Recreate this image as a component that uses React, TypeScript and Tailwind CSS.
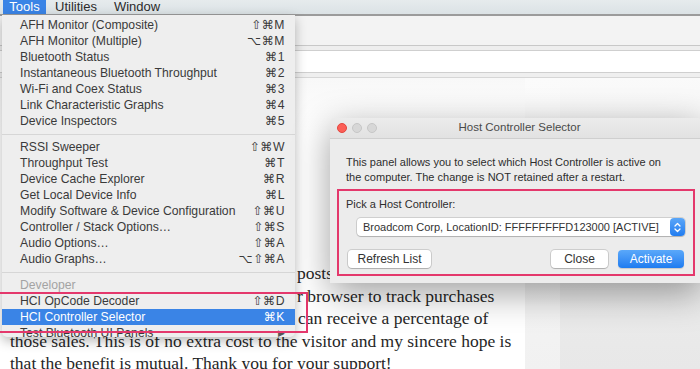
import React from 'react';

type Item = { label: string; keys?: string; kind?: 'item' | 'header' | 'active' | 'sub' };

const group1: Item[] = [
  { label: 'AFH Monitor (Composite)', keys: '⇧⌘M' },
  { label: 'AFH Monitor (Multiple)', keys: '⌥⌘M' },
  { label: 'Bluetooth Status', keys: '⌘1' },
  { label: 'Instantaneous Bluetooth Throughput', keys: '⌘2' },
  { label: 'Wi-Fi and Coex Status', keys: '⌘3' },
  { label: 'Link Characteristic Graphs', keys: '⌘4' },
  { label: 'Device Inspectors', keys: '⌘5' },
];

const group2: Item[] = [
  { label: 'RSSI Sweeper', keys: '⇧⌘W' },
  { label: 'Throughput Test', keys: '⌘T' },
  { label: 'Device Cache Explorer', keys: '⌘R' },
  { label: 'Get Local Device Info', keys: '⌘L' },
  { label: 'Modify Software & Device Configuration', keys: '⇧⌘U' },
  { label: 'Controller / Stack Options…', keys: '⇧⌘S' },
  { label: 'Audio Options…', keys: '⇧⌘A' },
  { label: 'Audio Graphs…', keys: '⌥⇧⌘A' },
];

const group3: Item[] = [
  { label: 'Developer', kind: 'header' },
  { label: 'HCI OpCode Decoder', keys: '⇧⌘D' },
  { label: 'HCI Controller Selector', keys: '⌘K', kind: 'active' },
  { label: 'Test Bluetooth UI Panels', kind: 'sub' },
];

const MenuRow: React.FC<{ item: Item }> = ({ item }) => {
  const active = item.kind === 'active';
  const header = item.kind === 'header';
  return (
    <div
      className={`h-4 flex items-center justify-between pl-[18px] pr-[10px] ${
        active ? 'bg-[#3a84e6] text-white' : header ? 'text-[#a3a3a3]' : 'text-[#3a3a3a]'
      }`}
    >
      <span>{item.label}</span>
      {item.keys && <span className="tracking-[0.5px]">{item.keys}</span>}
      {item.kind === 'sub' && <span className="text-[9px] text-[#555]">▶</span>}
    </div>
  );
};

const Separator = () => (
  <div className="h-[10px] flex items-center">
    <div className="h-px w-full bg-[#d6d6d6]" />
  </div>
);

const ToolsMenu = () => (
  <div className="absolute left-[2px] top-[15px] w-[293px] h-[322px] overflow-hidden rounded-b-[5px] bg-[#eeeeee] pt-[2px] shadow-[0_4px_12px_rgba(0,0,0,0.28)] text-[12.2px] leading-4 font-['Liberation_Sans','DejaVu_Sans',sans-serif]">
    {group1.map((it) => (
      <MenuRow key={it.label} item={it} />
    ))}
    <Separator />
    {group2.map((it) => (
      <MenuRow key={it.label} item={it} />
    ))}
    <Separator />
    {group3.map((it) => (
      <MenuRow key={it.label} item={it} />
    ))}
  </div>
);

const Stepper = () => (
  <div className="w-[15px] h-full rounded-[4px] bg-gradient-to-b from-[#5aa6f8] to-[#1f7cf0] flex items-center justify-center">
    <svg width="7" height="11" viewBox="0 0 7 11" fill="none" stroke="white" strokeWidth="1.3" strokeLinecap="round" strokeLinejoin="round">
      <path d="M1 4 L3.5 1.5 L6 4" />
      <path d="M1 7 L3.5 9.5 L6 7" />
    </svg>
  </div>
);

const HostDialog = () => (
  <div className="absolute left-[330px] top-[118px] w-[372px] h-[165px] rounded-t-[5px] overflow-hidden bg-[#ececec] shadow-[0_10px_36px_rgba(0,0,0,0.38)] font-['Liberation_Sans',sans-serif]">
    <div className="h-[21px] flex items-center relative border-b border-[#cfcfcf] bg-gradient-to-b from-[#ececec] to-[#e2e2e2]">
      <div className="flex items-center gap-[5px] pl-[7px]">
        <span className="w-[10px] h-[10px] rounded-full bg-[#fc5f57] border border-[#e2463f]" />
        <span className="w-[10px] h-[10px] rounded-full bg-[#d7d7d7] border border-[#c6c6c6]" />
        <span className="w-[10px] h-[10px] rounded-full bg-[#d7d7d7] border border-[#c6c6c6]" />
      </div>
      <div className="flex-1 text-center text-[11.5px] text-[#4a4a4a] pr-[40px]">Host Controller Selector</div>
    </div>
    <div className="pt-[16px] pl-[16px] text-[11px] leading-[15px] text-[#2e2e2e]">
      <div>This panel allows you to select which Host Controller is active on</div>
      <div>the computer. The change is NOT retained after a restart.</div>
    </div>
    <div className="mt-[4px] ml-[7px] w-[358px] border-2 border-[#e4386c] pt-[6px] pb-[6px] text-[11px] text-[#2e2e2e]">
      <div className="pl-[7px] leading-[14px]">Pick a Host Controller:</div>
      <div className="mt-[7px] ml-[18px] w-[328px] h-[18px] flex items-center justify-between rounded-[4px] bg-white shadow-[0_0_0_1px_rgba(0,0,0,0.12),0_1px_1px_rgba(0,0,0,0.15)]">
        <span className="pl-[6px] text-[11px] whitespace-nowrap text-[#333]">Broadcom Corp, LocationID: FFFFFFFFFD123000 [ACTIVE]</span>
        <Stepper />
      </div>
      <div className="mt-[14px] flex items-center pl-[9px] pr-[9px] text-[12px]">
        <button className="w-[83px] h-[18px] rounded-[4px] bg-white text-[#333] shadow-[0_0_0_1px_rgba(0,0,0,0.13),0_1px_1px_rgba(0,0,0,0.15)]">
          Refresh List
        </button>
        <div className="flex-1" />
        <button className="w-[57px] h-[18px] rounded-[4px] bg-white text-[#333] shadow-[0_0_0_1px_rgba(0,0,0,0.13),0_1px_1px_rgba(0,0,0,0.15)]">
          Close
        </button>
        <button className="ml-[10px] w-[66px] h-[18px] rounded-[4px] bg-gradient-to-b from-[#5aa8fa] to-[#1d7cf0] text-white shadow-[0_1px_1px_rgba(0,0,0,0.15)]">
          Activate
        </button>
      </div>
    </div>
  </div>
);

export default function App() {
  return (
    <div className="relative w-[700px] h-[369px] overflow-hidden bg-white">
      {/* menu bar */}
      <div className="h-[14px] flex items-center bg-gradient-to-b from-[#e6ebed] to-[#dbe2e5] text-[13px] text-[#2b2b2b] font-['Liberation_Sans',sans-serif]">
        <div className="ml-[3px] w-[43px] h-full bg-[#3a84e6] text-white flex items-center justify-center">Tools</div>
        <div className="ml-[9px]">Utilities</div>
        <div className="ml-[17px]">Window</div>
      </div>
      <div className="h-[2px] bg-[#9b9b9b]" />

      {/* browser chrome */}
      <div className="h-[29px] bg-[#f3f3f3]" />
      <div className="h-px bg-[#c8c8c8]" />
      <div className="h-[4px] bg-[#eeeeee]" />
      <div className="h-px bg-[#cfcfcf]" />
      <div className="h-[21px] bg-white" />
      <div className="h-px bg-[#cfcfcf]" />
      <div className="h-[4px] bg-[#efefef]" />
      <div className="h-px bg-[#d6d6d6]" />

      {/* page content */}
      <div className="flex h-[291px]">
        <div className="w-[525px] bg-gradient-to-b from-[#f8f8f8] to-white to-[20%] pt-[184px] pl-[10px] text-[17.5px] leading-[22.5px] text-[#262626] whitespace-nowrap font-['Liberation_Serif',serif]">
          <div className="pl-[287px]">posts</div>
          <div className="pl-[287px]">r browser to track purchases</div>
          <div className="pl-[288px]">can receive a percentage of</div>
          <div>those sales. This is of no extra cost to the visitor and my sincere hope is</div>
          <div>that the benefit is mutual. Thank you for your support!</div>
        </div>
        <div className="w-[35px] bg-gradient-to-b from-[#fbfbfb] via-[#f6f6f6] to-[#f1f1f1]" />
        <div className="flex-1 bg-gradient-to-b from-[#fafafa] via-[#eeeeee] to-[#e8e8e8]" />
      </div>

      <ToolsMenu />

      {/* highlight frame round the menu entry */}
      <div className="absolute left-[-4px] top-[292px] w-[312px] h-[41px] border-2 border-[#e4386c]" />

      <HostDialog />
    </div>
  );
}
